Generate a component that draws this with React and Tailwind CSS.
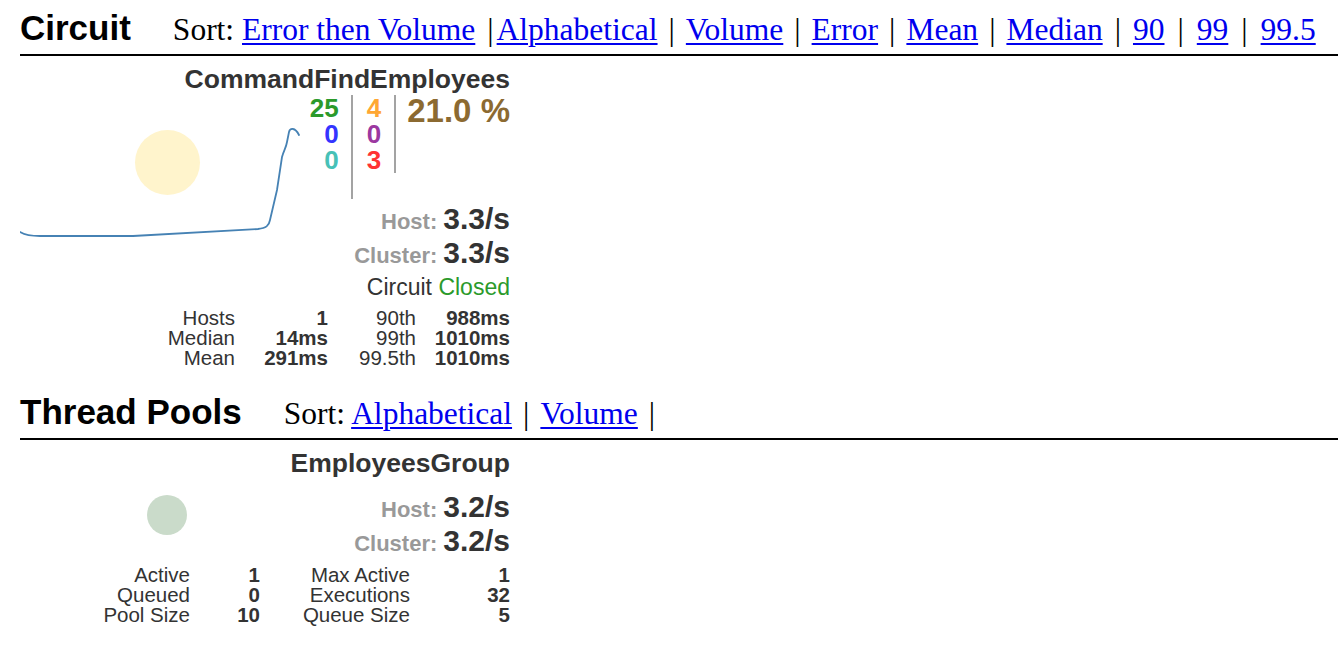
import React from "react";

const sans = "font-['Liberation_Sans',Arial,sans-serif]";

function Link({ children }) {
  return <a href="#" className="text-[#0000ee] underline decoration-[1.5px] underline-offset-[3px]">{children}</a>;
}

function Pipe({ cls = "mx-[11px]" }) {
  return <span className={`${cls} inline-block text-black`}>|</span>;
}

function SectionHeader({ title, children }) {
  return (
    <div className="flex items-baseline h-[56px] pt-[10px] border-b-2 border-black">
      <h2 className={`${sans} text-[35px] leading-[35px] font-bold text-black mr-[42px]`}>{title}</h2>
      <div className="font-['Liberation_Serif','Times_New_Roman',serif] text-[31.5px] leading-[35px] text-black whitespace-nowrap">
        {children}
      </div>
    </div>
  );
}

function Rate({ label, value }) {
  return (
    <div className="flex items-baseline justify-end h-[34px] leading-[34px]">
      <span className="text-[22px] font-bold text-[#999999] mr-[6px]">{label}</span>
      <span className="text-[30px] font-bold text-[#333333]">{value}</span>
    </div>
  );
}

function Stat({ children, bold }) {
  return <div className={`text-right whitespace-nowrap ${bold ? "font-bold" : ""}`}>{children}</div>;
}

export default function App() {
  return (
    <div className={`${sans} bg-white w-[1338px] h-[666px] pl-[20px] text-[#333333] overflow-hidden`}>
      <SectionHeader title="Circuit">
        Sort: <Link>Error then Volume</Link>
        <Pipe cls="ml-[12px] mr-[3px]" />
        <Link>Alphabetical</Link>
        <Pipe />
        <Link>Volume</Link>
        <Pipe />
        <Link>Error</Link>
        <Pipe />
        <Link>Mean</Link>
        <Pipe />
        <Link>Median</Link>
        <Pipe cls="mx-[12px]" />
        <Link>90</Link>
        <Pipe cls="mx-[13px]" />
        <Link>99</Link>
        <Pipe cls="mx-[13px]" />
        <Link>99.5</Link>
      </SectionHeader>

      {/* Circuit card */}
      <div className="relative w-[490px] h-[328px] pt-[8px] flex flex-col items-end">
        <div className="absolute left-[115px] top-[74px] w-[65px] h-[65px] rounded-full bg-[#fff4cc]" />
        <svg className="absolute left-0 top-0" width="490" height="328" viewBox="20 56 490 328">
          <path
            d="M20,232 C25,235 30,236 40,236 L133,236 L258,229 C266,228 269,226 270,220 L277,190 L282,157 C284,150 286,148 287,142 L289,132 C290,128 295,127 299,135"
            fill="none"
            stroke="#4682b4"
            strokeWidth="1.8"
            strokeLinecap="round"
          />
        </svg>
        <div className="relative text-[26.5px] leading-[30px] font-bold text-[#333333]">CommandFindEmployees</div>
        <div className="relative flex items-start mt-[1px] font-bold">
          <div className="flex flex-col items-end text-[26px] leading-[26px] pr-[12px] pb-[26px] border-r-2 border-[#a3a3a3]">
            <span className="text-[#2b9a2b]">25</span>
            <span className="text-[#3434ff]">0</span>
            <span className="text-[#47c1b7]">0</span>
          </div>
          <div className="flex flex-col items-end text-[26px] leading-[26px] pl-[14px] pr-[13px] border-r-2 border-[#a3a3a3]">
            <span className="text-[#ffa733]">4</span>
            <span className="text-[#9b38a0]">0</span>
            <span className="text-[#ff3333]">3</span>
          </div>
          <div className="pl-[11px] text-[33px] leading-[37px] text-[#8c6a31] -mt-[3px]">21.0 %</div>
        </div>
        <div className="relative mt-[3px] w-full">
          <Rate label="Host:" value="3.3/s" />
          <Rate label="Cluster:" value="3.3/s" />
        </div>
        <div className="relative mt-[2px] text-[23px] leading-[30px] text-[#333333]">
          Circuit <span className="text-[#2b9a2b]">Closed</span>
        </div>
        <div className="relative mt-[6px] grid grid-cols-[215px_93px_88px_94px] text-[20.5px] leading-[20px] text-[#333333]">
          <Stat>Hosts</Stat>
          <Stat bold>1</Stat>
          <Stat>90th</Stat>
          <Stat bold>988ms</Stat>
          <Stat>Median</Stat>
          <Stat bold>14ms</Stat>
          <Stat>99th</Stat>
          <Stat bold>1010ms</Stat>
          <Stat>Mean</Stat>
          <Stat bold>291ms</Stat>
          <Stat>99.5th</Stat>
          <Stat bold>1010ms</Stat>
        </div>
      </div>

      <SectionHeader title="Thread Pools">
        Sort: <Link>Alphabetical</Link>
        <Pipe />
        <Link>Volume</Link>
        <Pipe />
      </SectionHeader>

      {/* Thread pool card */}
      <div className="relative w-[490px] pt-[8px] flex flex-col items-end">
        <div className="absolute left-[127px] top-[55px] w-[40px] h-[40px] rounded-full bg-[#cadbca]" />
        <div className="relative text-[26.5px] leading-[30px] font-bold text-[#333333]">EmployeesGroup</div>
        <div className="relative mt-[12px] w-full">
          <Rate label="Host:" value="3.2/s" />
          <Rate label="Cluster:" value="3.2/s" />
        </div>
        <div className="relative mt-[7px] grid grid-cols-[170px_70px_150px_100px] text-[20.5px] leading-[20px] text-[#333333]">
          <Stat>Active</Stat>
          <Stat bold>1</Stat>
          <Stat>Max Active</Stat>
          <Stat bold>1</Stat>
          <Stat>Queued</Stat>
          <Stat bold>0</Stat>
          <Stat>Executions</Stat>
          <Stat bold>32</Stat>
          <Stat>Pool Size</Stat>
          <Stat bold>10</Stat>
          <Stat>Queue Size</Stat>
          <Stat bold>5</Stat>
        </div>
      </div>
    </div>
  );
}
